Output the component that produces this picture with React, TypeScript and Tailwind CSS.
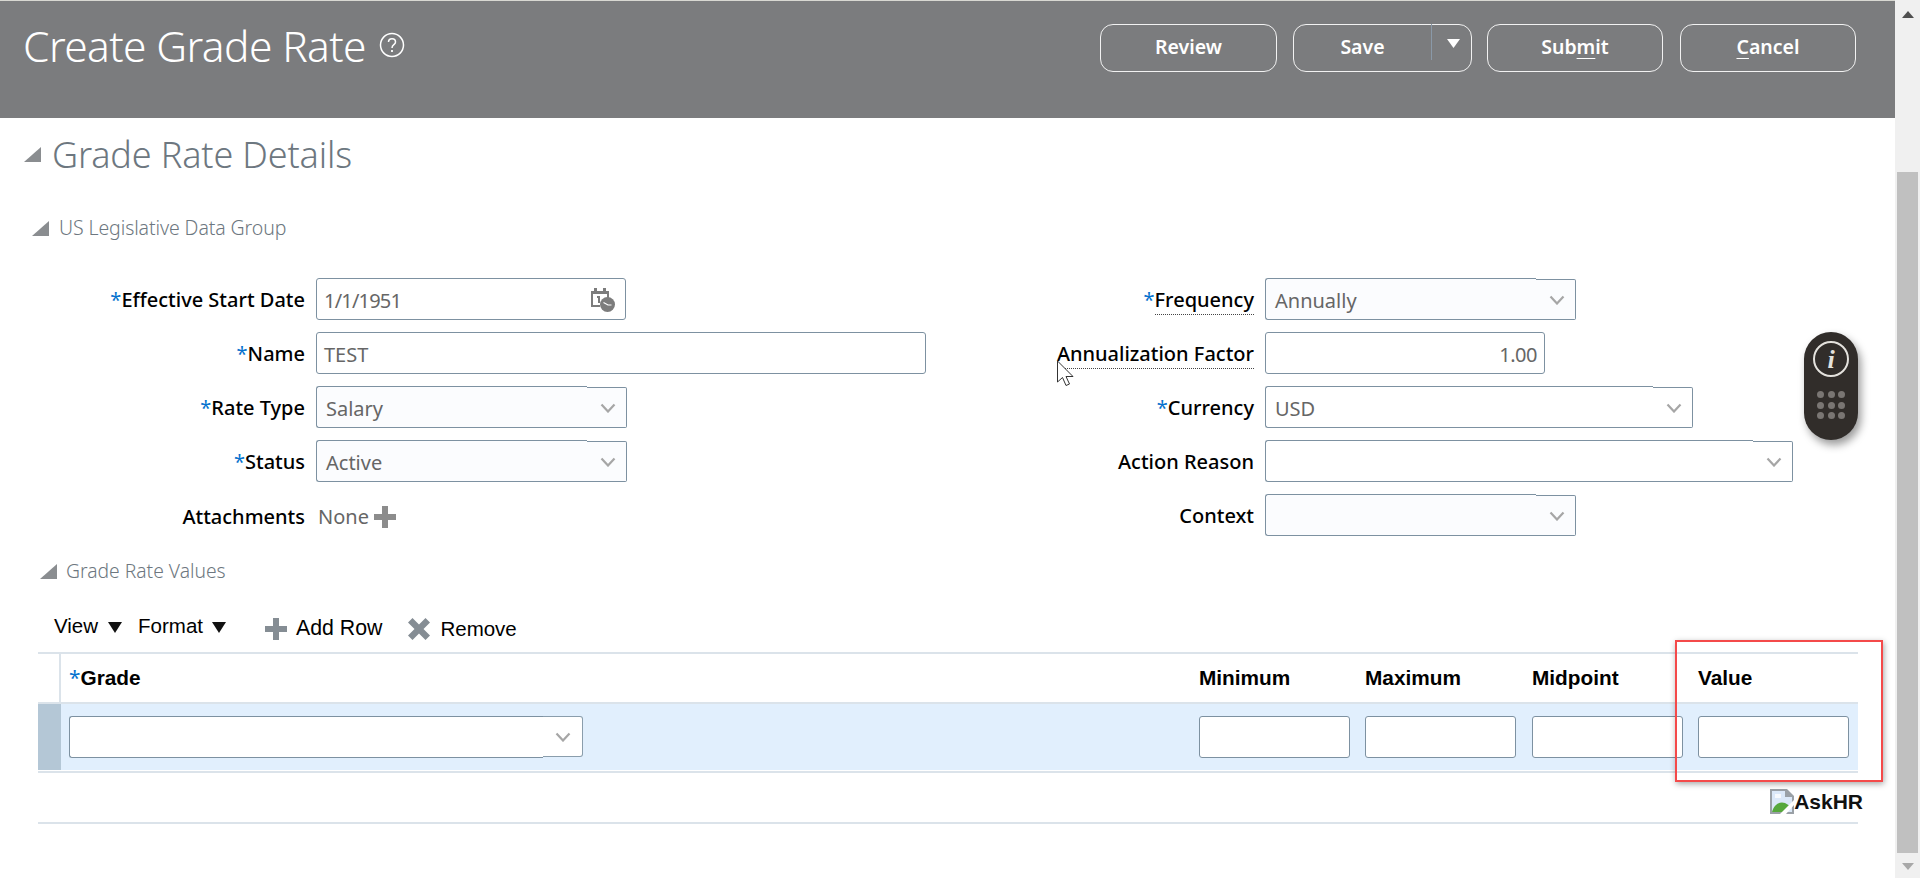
import type { ReactNode } from 'react';

const UI = "font-['Noto_Sans',sans-serif]";
const ARIAL = "font-['Liberation_Sans',Arial,sans-serif]";

const Chevron = () => (
  <svg width="16" height="10" viewBox="0 0 16 10" fill="none" stroke="#a6a6a6" strokeWidth="2.200">
    <path d="M1.500 1.500L8 8.500l6.500-7" />
  </svg>
);

const Corner = ({ size = 17 }: { size?: number }) => (
  <svg width={size} height={size - 2} viewBox="0 0 17 15" className="shrink-0">
    <path d="M17 0v15H0z" fill="#8a8d90" />
  </svg>
);

const Plus = ({ size = 22, color = '#8a9095' }: { size?: number; color?: string }) => (
  <svg width={size} height={size} viewBox="0 0 22 22" className="shrink-0">
    <path d="M8 0h6v8h8v6h-8v8H8v-8H0V8h8z" fill={color} />
  </svg>
);

const Calendar = () => (
  <svg width="24" height="24" viewBox="0 0 24 24">
    <path d="M0 3h3V0h3v3h6V0h3v3h3v9h-2V6H2v11h7v2H0z" fill="#7c7c7c" />
    <path d="M6 8h3v7H7v-5H6z" fill="#7c7c7c" />
    <circle cx="16.500" cy="16.500" r="7.500" fill="#7c7c7c" />
    <path d="M12.500 14.500l4.500 2.500h3.500" fill="none" stroke="#fff" strokeWidth="1.200" />
  </svg>
);

const Label = ({ text, required, dotted }: { text: string; required?: boolean; dotted?: boolean }) => (
  <span className={`pt-[2px] text-[20px] leading-[26px] font-medium text-black whitespace-nowrap ${UI}`}>
    {required && <span className="text-[#0572ce] font-normal">*</span>}
    <span className={dotted ? 'border-b border-dotted border-[#444] pb-[1px]' : ''}>{text}</span>
  </span>
);

const Row = ({ labelWidth, label, children }: { labelWidth: string; label: ReactNode; children: ReactNode }) => (
  <div className="flex items-center h-[42px]">
    <div className={`${labelWidth} flex justify-end shrink-0`}>{label}</div>
    {children}
  </div>
);

const TextBox = ({
  width,
  value,
  right,
  icon,
  valueClass = '',
}: {
  width: string;
  value?: string;
  right?: boolean;
  icon?: ReactNode;
  valueClass?: string;
}) => (
  <div
    className={`${width} h-[42px] flex items-center bg-white border border-[#7d91a1] rounded-[3px] px-[7px] text-[20px] text-[#666] ${UI} ${
      right ? 'justify-end' : 'justify-between'
    }`}
  >
    {value && <span className={`pt-[3px] ${valueClass}`}>{value}</span>}
    {icon}
  </div>
);

const Select = ({ width, value, tint = 'bg-[#fbfcfe]' }: { width: string; value?: string; tint?: string }) => (
  <div className={`${width} h-[42px] flex text-[20px] text-[#666] ${UI}`}>
    <div className={`flex-1 flex items-center pl-[9px] pt-[3px] ${tint} border-y border-l border-[#7d91a1] rounded-l-[3px]`}>{value}</div>
    <div className={`w-[40px] mt-[1px] flex items-center justify-center pl-[2px] ${tint} border-y border-r border-[#7d91a1] rounded-r-[2px]`}>
      <Chevron />
    </div>
  </div>
);

const Button = ({ width, className = '', children }: { width: string; className?: string; children: ReactNode }) => (
  <div className={`${width} ${className} h-[48px] pb-[2px] flex items-center justify-center rounded-[13px] border border-[#f2f2f2] text-white text-[19.500px] font-semibold`}>
    {children}
  </div>
);

const Cell = ({ children }: { children?: ReactNode }) => <div className="pl-2 flex items-center">{children}</div>;

const NumberBox = () => <div className="w-[151px] h-[42px] bg-white border border-[#7d91a1] rounded-[3px]" />;

const Heading = ({ children }: { children: ReactNode }) => (
  <div className={`pl-2 flex items-center text-[20.800px] font-bold text-black ${ARIAL}`}>{children}</div>
);

const Caret = () => (
  <svg width="14" height="11" viewBox="0 0 14 11" className="shrink-0 mt-[2px]">
    <path d="M0 0h14L7 11z" fill="#111" />
  </svg>
);

export default function App() {
  return (
    <div className={`relative flex w-[1920px] h-[878px] overflow-hidden bg-white ${UI}`}>
      <div className="w-[1895px] shrink-0">
        {/* Page header */}
        <header className="h-[118px] border-t border-[#d8d8d2] bg-[#7b7c7e] flex justify-between pl-[23px] pr-[39px] pt-[23px]">
          <div className="flex items-start">
            <h1 className="text-[42.500px] leading-[44px] font-light text-white tracking-[-0.6px] whitespace-nowrap">Create Grade Rate</h1>
            <svg width="26" height="26" viewBox="0 0 26 26" className="ml-[13px] mt-[8px]" fill="none" stroke="#fff">
              <circle cx="13" cy="13" r="11.500" strokeWidth="1.500" />
              <path d="M9.500 10c0-2 1.500-3.300 3.500-3.300s3.500 1.300 3.500 3.200c0 2.800-3.500 2.700-3.500 6" strokeWidth="1.500" />
              <path d="M13 18v2" strokeWidth="1.800" />
            </svg>
          </div>
          <div className="flex">
            <Button width="w-[177px]">Review</Button>
            <div className="ml-4 w-[179px] h-[48px] pb-[2px] flex items-center rounded-[13px] border border-[#f2f2f2] text-white text-[19.500px] font-semibold">
              <span className="w-[137px] text-center">Save</span>
              <span className="w-px h-[36px] -mt-[10px] bg-[#8a99a8]" />
              <svg width="13" height="9" viewBox="0 0 13 9" className="ml-[15px] -mt-[8px]">
                <path d="M0 0h13L6.500 9z" fill="#fff" />
              </svg>
            </div>
            <Button width="w-[176px]" className="ml-[15px]">
              Sub<span className="underline underline-offset-4">m</span>it
            </Button>
            <Button width="w-[176px]" className="ml-[17px]">
              <span className="underline underline-offset-4">C</span>ancel
            </Button>
          </div>
        </header>

        {/* Grade Rate Details */}
        <div className="h-[72px] flex items-center pl-6 gap-[11px]">
          <Corner />
          <h2 className="pt-[2px] text-[36px] font-light text-[#6d7780] tracking-[-0.15px]">Grade Rate Details</h2>
        </div>
        <div className="mt-4 h-[44px] flex items-center pl-8 gap-[10px]">
          <Corner />
          <h3 className="text-[19.500px] font-light text-[#6d7780] tracking-[-0.1px]">US Legislative Data Group</h3>
        </div>

        {/* Form */}
        <div className="mt-7 flex h-[258px]">
          <div className="w-[1000px] flex flex-col gap-3">
            <Row labelWidth="w-[316px] pr-[11px]" label={<Label text="Effective Start Date" required />}>
              <TextBox
                width="w-[310px]"
                value="1/1/1951"
                valueClass="tracking-[-0.8px]"
                icon={<span className="mr-[3px] mt-[2px]"><Calendar /></span>}
              />
            </Row>
            <Row labelWidth="w-[316px] pr-[11px]" label={<Label text="Name" required />}>
              <TextBox width="w-[610px]" value="TEST" />
            </Row>
            <Row labelWidth="w-[316px] pr-[11px]" label={<Label text="Rate Type" required />}>
              <Select width="w-[311px]" value="Salary" />
            </Row>
            <Row labelWidth="w-[316px] pr-[11px]" label={<Label text="Status" required />}>
              <Select width="w-[311px]" value="Active" />
            </Row>
            <Row labelWidth="w-[316px] pr-[11px]" label={<span className="mt-[2px] flex"><Label text="Attachments" /></span>}>
              <span className="ml-[2px] mt-1 text-[20px] text-[#666]">None</span>
              <span className="ml-[5px] mt-1"><Plus color="#8c8c8c" /></span>
            </Row>
          </div>
          <div className="flex flex-col gap-3">
            <Row labelWidth="w-[265px] pr-[11px]" label={<Label text="Frequency" required dotted />}>
              <Select width="w-[311px]" value="Annually" />
            </Row>
            <Row labelWidth="w-[265px] pr-[11px]" label={<Label text="Annualization Factor" dotted />}>
              <TextBox width="w-[280px]" value="1.00" valueClass="tracking-[-0.5px]" right />
            </Row>
            <Row labelWidth="w-[265px] pr-[11px]" label={<Label text="Currency" required />}>
              <Select width="w-[428px]" value="USD" tint="bg-white" />
            </Row>
            <Row labelWidth="w-[265px] pr-[11px]" label={<Label text="Action Reason" />}>
              <Select width="w-[528px]" tint="bg-white" />
            </Row>
            <Row labelWidth="w-[265px] pr-[11px]" label={<Label text="Context" />}>
              <Select width="w-[311px]" />
            </Row>
          </div>
        </div>

        {/* Grade Rate Values */}
        <div className="mt-4 h-[38px] flex items-center pl-10 gap-[9px]">
          <Corner />
          <h3 className="text-[19.300px] font-light text-[#6d7780]">Grade Rate Values</h3>
        </div>

        <div className={`h-[62px] pt-4 flex items-center pl-[54px] text-[20.500px] text-black ${ARIAL}`}>
          <span className="-mt-[5px]">View</span>
          <span className="ml-[10px] -mt-[5px]"><Caret /></span>
          <span className="ml-[16px] -mt-[5px]">Format</span>
          <span className="ml-[9px] -mt-[5px]"><Caret /></span>
          <span className="ml-[39px]"><Plus color="#858d94" /></span>
          <span className="ml-[9px] text-[21.300px]">Add Row</span>
          <svg width="22" height="22" viewBox="0 0 22 22" className="ml-[26px]">
            <path d="M4.500 0L11 6.500 17.500 0 22 4.500 15.500 11l6.500 6.500L17.500 22 11 15.500 4.500 22 0 17.500 6.500 11 0 4.500z" fill="#858d94" />
          </svg>
          <span className="ml-[10px] text-[20.500px]">Remove</span>
        </div>

        {/* Table */}
        <div className="ml-[38px] w-[1820px] border-t-2 border-[#dbe3ea]">
          <div className="grid grid-cols-[23px_1130px_166px_167px_166px_168px] h-[50px] border-b-2 border-[#dbe3ea]">
            <div className="border-r-2 border-[#dbe3ea]" />
            <Heading>
              <span className={`text-[#0572ce] font-normal ${UI}`}>*</span>Grade
            </Heading>
            <Heading>Minimum</Heading>
            <Heading>Maximum</Heading>
            <Heading>Midpoint</Heading>
            <Heading>Value</Heading>
          </div>
          <div className="grid grid-cols-[23px_1130px_166px_167px_166px_168px] h-[66px] bg-[#e1effd]">
            <div className="bg-[#b4c7d6]" />
            <Cell>
              <div className="w-[514px] h-[42px] flex">
                <div className="flex-1 bg-white border-y border-l border-[#7d91a1] rounded-l-[3px]" />
                <div className="w-[40px] h-[41px] bg-white flex items-center justify-center border-y border-r border-[#8a9dac] rounded-r-[3px] pl-[1px]">
                  <Chevron />
                </div>
              </div>
            </Cell>
            <Cell><NumberBox /></Cell>
            <Cell><NumberBox /></Cell>
            <Cell><NumberBox /></Cell>
            <Cell><NumberBox /></Cell>
          </div>
          <div className="mt-[1px] h-[53px] border-t-2 border-b-2 border-[#dbe3ea] flex justify-end items-start pt-[13px]">
            <div className="flex items-center -mr-[5px]">
              <svg width="24" height="25" viewBox="0 0 24 25" className="shrink-0">
                <path d="M0 0h17l7 7v18H0z" fill="#9aa0a6" />
                <path d="M2 2h13v6h7v15H2z" fill="#dbe8f8" />
                <path d="M5 5h6v4H5z" fill="#f6f9fd" />
                <path d="M2 23c2-8 8-11 13-9l5 3-5 6z" fill="#56a83c" />
                <path d="M10 25L24 11v5L16 25z" fill="#fff" />
              </svg>
              <span className={`text-[21px] font-bold text-[#111] ${ARIAL}`}>AskHR</span>
            </div>
          </div>
        </div>
      </div>

      {/* Browser scrollbar */}
      <div className="w-[25px] h-full flex flex-col items-center bg-[#f0f0f0]">
        <svg width="12" height="7" viewBox="0 0 12 7" className="mt-[11px] shrink-0">
          <path d="M6 0l6 7H0z" fill="#505050" />
        </svg>
        <div className="mt-[154px] w-[21px] h-[681px] bg-[#c0c0c0] shrink-0" />
        <svg width="12" height="7" viewBox="0 0 12 7" className="mt-[10px] shrink-0">
          <path d="M0 0h12L6 7z" fill="#a8a8a8" />
        </svg>
      </div>

      {/* Floating info widget */}
      <div className="absolute left-[1804px] top-[332px] w-[54px] h-[108px] rounded-[27px] bg-[#312d2a] shadow-[3px_5px_8px_rgba(0,0,0,0.4)] flex flex-col items-center pt-[9px]">
        <div className="w-[36px] h-[36px] rounded-full border-[2.500px] border-[#e4e2dd] flex items-center justify-center text-[#e4e2dd] text-[26px] font-bold italic font-['Liberation_Serif',serif]">
          i
        </div>
        <div className="mt-[14px] grid grid-cols-3 gap-[3.500px]">
          {Array.from({ length: 9 }).map((_, i) => (
            <span key={i} className="w-[7px] h-[7px] rounded-full bg-[#7a7673]" />
          ))}
        </div>
      </div>

      {/* Annotation box from the screenshot */}
      <div className="absolute left-[1675px] top-[640px] w-[208px] h-[142px] border-[2.500px] border-[#f44a4a] shadow-[1px_2px_6px_rgba(0,0,0,0.35)] pointer-events-none" />

      {/* Mouse cursor */}
      <svg width="20" height="28" viewBox="0 0 20 28" className="absolute left-[1056px] top-[360px]">
        <path d="M1.500 1v21l5-4.500 3.500 8 3.500-1.500-3.500-7.500h7z" fill="#fff" stroke="#333" strokeWidth="1" />
      </svg>
    </div>
  );
}
